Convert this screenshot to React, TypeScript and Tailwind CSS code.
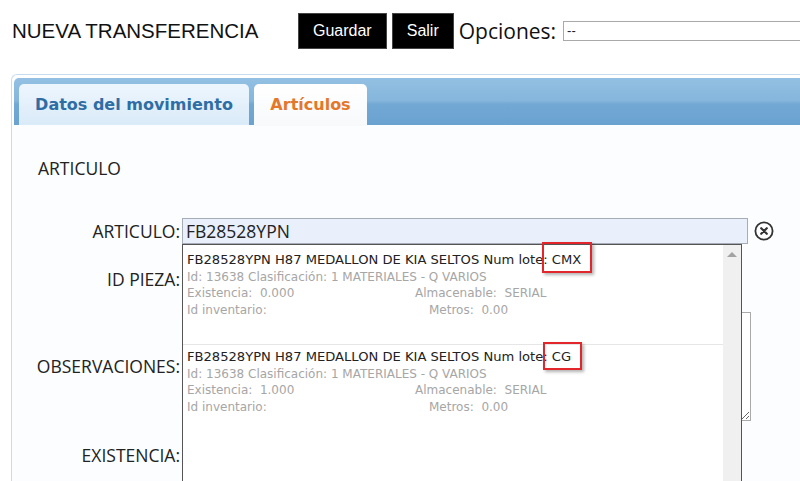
import React from "react";

type Lote = {
  lote: string;
  existencia: string;
  box: string;
};

const LOTES: Lote[] = [
  { lote: "CMX", existencia: "0.000", box: "left-[-10px] right-[-11px] top-[-10px] bottom-[-6px]" },
  { lote: "CG", existencia: "1.000", box: "left-[-9px] right-[-11px] top-[-7px] bottom-[-6px]" },
];

function CloseIcon() {
  return (
    <svg width="20" height="20" viewBox="0 0 20 20">
      <circle cx="10" cy="10" r="8.6" fill="white" stroke="#333" strokeWidth="1.8" />
      <path d="M7.2 7.2 L12.8 12.8 M12.8 7.2 L7.2 12.8" stroke="#333" strokeWidth="2.2" strokeLinecap="round" />
    </svg>
  );
}

export default function App() {
  return (
    <div className="relative w-[800px] h-[481px] overflow-hidden bg-white font-['Open_Sans',sans-serif]">
      {/* HEADER */}
      <div className="flex items-center h-[49px] pt-[13px] pl-[12px]">
        <span className="w-[286px] shrink-0 text-[20.5px] text-[#111] font-['Liberation_Sans',Arial,sans-serif] leading-none">
          NUEVA TRANSFERENCIA
        </span>
        <button className="shrink-0 h-[36px] px-[14px] bg-black text-white border border-[#444] text-[16px] font-['Liberation_Sans',Arial,sans-serif]">
          Guardar
        </button>
        <button className="shrink-0 ml-[5px] h-[36px] px-[14px] bg-black text-white border border-[#444] text-[16px] font-['Liberation_Sans',Arial,sans-serif]">
          Salir
        </button>
        <span className="shrink-0 ml-[5px] text-[21px] text-[#111] leading-none">Opciones:</span>
        <div className="ml-[7px] h-[20px] w-[260px] shrink-0 border border-[#a9a9a9] text-[13px] leading-[18px] px-[3px] text-[#222] font-['Liberation_Sans',Arial,sans-serif]">
          --
        </div>
      </div>

      {/* PANEL */}
      <div className="mt-[25px] ml-[11px] border-l border-t border-[#c6ddf1] rounded-tl-[6px] h-[420px]">
        <div className="pt-[3px] pl-[2px]">
          <div className="h-[47px] rounded-tl-[5px] bg-[linear-gradient(#93c0e3_0%,#86b6dc_48%,#72a8d4_56%,#6aa2d0_100%)] flex items-end pl-[5px] gap-[5px] font-['DejaVu_Sans',sans-serif]">
            <div className="w-[230px] h-[41px] rounded-t-[5px] bg-[linear-gradient(#eef6fd,#d9eaf8)] flex items-center justify-center text-[16px] font-bold text-[#2f6da5]">
              Datos del movimiento
            </div>
            <div className="w-[113px] h-[42px] -mb-[1px] rounded-t-[5px] bg-[linear-gradient(#ffffff,#f7f9fb)] flex items-center justify-center text-[16px] font-bold text-[#e4772a]">
              Artículos
            </div>
          </div>
        </div>

        {/* BODY */}
        <div className="bg-[#fbfdfe] h-full pt-[31px] text-[#222] text-[17.5px]">
          <div className="pl-[26px] leading-[24px]">ARTICULO</div>

          <div className="mt-[38px] flex items-center h-[26px]">
            <span className="w-[168px] text-right">ARTICULO:</span>
            <div className="relative ml-[2px]">
              <div className="w-[566px] h-[26px] bg-[#e9effb] border border-[#a6adb8] pl-[3px] leading-[24px]">
                FB28528YPN
              </div>

              {/* AUTOCOMPLETE LIST */}
              <div className="absolute top-full left-0 z-10 w-[560px] h-[240px] bg-white border-t border-l border-r border-[#555] flex font-['DejaVu_Sans',sans-serif] text-[12px] leading-[16.5px]">
                <div className="flex-1">
                  {LOTES.map((l, i) => (
                    <div
                      key={l.lote}
                      className={
                        i === 0
                          ? "h-[100px] pt-[7px] pl-[4px] border-b border-[#e6e6e6]"
                          : "h-[100px] pt-[4px] pl-[4px]"
                      }
                    >
                      <div className="text-[#222] text-[13.1px] whitespace-nowrap">
                        FB28528YPN H87 MEDALLON DE KIA SELTOS Num lote:{" "}
                        <span className="relative">
                          {l.lote}
                          <span
                            className={`absolute ${l.box} border-2 border-[#e3262b] shadow-[2px_2px_3px_rgba(0,0,0,0.3)]`}
                          />
                        </span>
                      </div>
                      <div className="text-[#a6a6a6] whitespace-nowrap">
                        Id: 13638 Clasificación: 1 MATERIALES - Q VARIOS
                      </div>
                      <div className="text-[#a6a6a6] flex whitespace-nowrap">
                        <span className="w-[228px]">Existencia:&nbsp; {l.existencia}</span>
                        <span>Almacenable:&nbsp; SERIAL</span>
                      </div>
                      <div className="text-[#a6a6a6] flex whitespace-nowrap">
                        <span className="w-[242px]">Id inventario:</span>
                        <span>Metros:&nbsp; 0.00</span>
                      </div>
                    </div>
                  ))}
                </div>
                <div className="w-[18px] bg-[#f0f0f0] flex justify-center pt-[7px]">
                  <div className="w-0 h-0 border-l-[5px] border-r-[5px] border-b-[5px] border-l-transparent border-r-transparent border-b-[#a3a3a3]" />
                </div>
              </div>
            </div>
            <div className="ml-[6px] flex">
              <CloseIcon />
            </div>
          </div>

          <div className="mt-[22px] flex items-center h-[26px]">
            <span className="w-[168px] text-right">ID PIEZA:</span>
            <div className="ml-[2px] w-[300px] h-[26px] border border-[#aaa] bg-white" />
          </div>

          <div className="mt-[20px] flex items-center">
            <span className="w-[168px] text-right">OBSERVACIONES:</span>
            <textarea className="ml-[2px] w-[569px] h-[109px] border border-[#aaa] bg-white block" />
          </div>

          <div className="mt-[21px] flex items-center h-[26px]">
            <span className="w-[168px] text-right">EXISTENCIA:</span>
          </div>
        </div>
      </div>
    </div>
  );
}
